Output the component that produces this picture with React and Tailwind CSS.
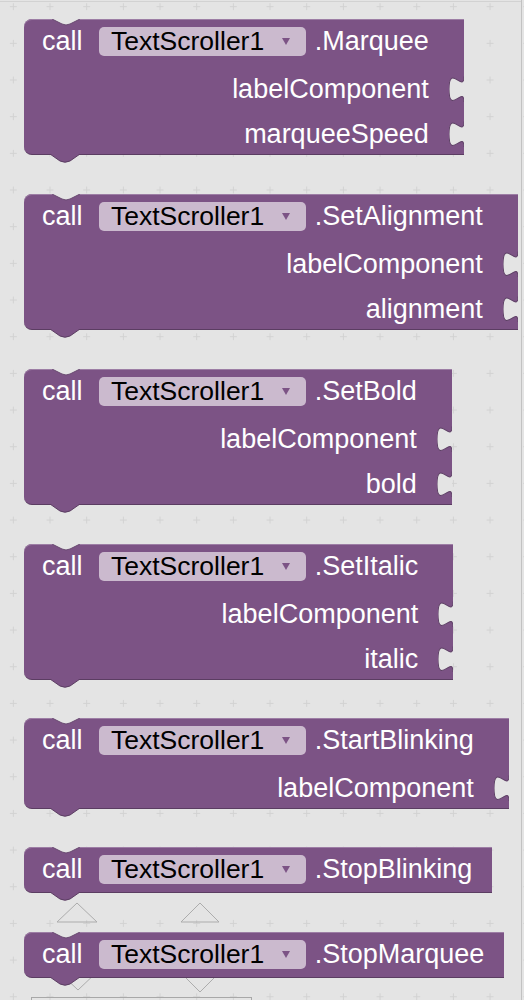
import React from 'react';

// blocks on the workspace, top to bottom
const blocks = [
  { method: '.Marquee', inputs: ['labelComponent', 'marqueeSpeed'], space: 'mt-[19px]' },
  { method: '.SetAlignment', inputs: ['labelComponent', 'alignment'], space: 'mt-[39px]' },
  { method: '.SetBold', inputs: ['labelComponent', 'bold'], space: 'mt-[39px]' },
  { method: '.SetItalic', inputs: ['labelComponent', 'italic'], space: 'mt-[39px]' },
  { method: '.StartBlinking', inputs: ['labelComponent'], space: 'mt-[38px]' },
  { method: '.StopBlinking', inputs: [], space: 'mt-[38px]' },
  { method: '.StopMarquee', inputs: [], space: 'mt-[39px]' },
];

const Workspace = () => (
  <svg className="absolute inset-0" width="524" height="1000">
    <defs>
      <pattern id="grid" x="-5" y="-11.67" width="36.67" height="36.67" patternUnits="userSpaceOnUse">
        <path d="M14.83 18.33H21.83M18.33 14.83V21.83" stroke="#d2d2d2" strokeWidth="1" />
      </pattern>
    </defs>
    <rect width="524" height="1000" fill="url(#grid)" />
    <line x1="0" y1="1.5" x2="521" y2="1.5" stroke="#d2d2d2" />
    <line x1="521.5" y1="0" x2="521.5" y2="1000" stroke="#c2c2c2" />
    {/* insertion markers */}
    <path d="M57 922L77 903L97 922Z" fill="none" stroke="#acacac" />
    <path d="M181 922L200 903L219 922Z" fill="none" stroke="#acacac" />
    <path d="M58 971L78 990L98 971" fill="none" stroke="#acacac" />
    <path d="M180 972L200 992L220 972" fill="none" stroke="#acacac" />
    <rect x="31.5" y="997.5" width="220" height="20" fill="none" stroke="#a8a8a8" />
  </svg>
);

const Socket = () => (
  <svg
    className="absolute right-0 top-[4px]"
    width="15"
    height="34"
    viewBox="-8 0 8 20"
    preserveAspectRatio="none"
  >
    <path d="M0 5C0 15 -8 -3 -8 12.5S0 10 0 20Z" fill="#e4e4e4" />
    <path
      d="M0 5C0 15 -8 -3 -8 12.5S0 10 0 20"
      fill="none"
      stroke="#5e4066"
      strokeWidth="1"
      vectorEffect="non-scaling-stroke"
    />
  </svg>
);

const Block = ({ method, inputs, space }) => {
  const hasInputs = inputs.length > 0;
  return (
    <div
      className={`relative flex flex-col self-start rounded-l-[8px] border-b border-[#5b3d62] bg-[#7c5385] shadow-[inset_0_1px_0_#9d7ea5] ${space}`}
    >
      {/* notch on top */}
      <svg className="absolute left-[28px] top-0" width="28" height="7">
        <path d="M0 0L10 5Q14 7 18 5L28 0Z" fill="#e4e4e4" />
        <path d="M0 0L10 5Q14 7 18 5L28 0" fill="none" stroke="#684870" />
      </svg>

      <div className={`flex h-[45px] items-center pl-[18px] ${hasInputs ? 'pr-[35px]' : 'pr-[20px]'}`}>
        <span className="text-[27px] leading-none text-white">call</span>
        <span className="ml-[16.5px] flex h-[29px] items-center rounded-[5px] bg-[#cbbace] pl-[12px] pr-[16px] text-[26.5px] leading-[29px] text-black">
          TextScroller1
          <svg className="ml-[18px]" width="8" height="7">
            <path d="M0 0H8L4 7Z" fill="#7c5385" />
          </svg>
        </span>
        <span className="ml-[8.5px] text-[27px] leading-none text-white">{method}</span>
      </div>

      {inputs.map((name) => (
        <div key={name} className="relative flex h-[45px] items-center justify-end pl-[18px] pr-[35px] pt-[5px]">
          <span className="text-[27px] leading-none text-white">{name}</span>
          <Socket />
        </div>
      ))}

      {/* tab below */}
      <svg className="absolute left-[26px] top-full" width="30" height="9">
        <path d="M0 0L10 7Q15 9.5 20 7L30 0Z" fill="#7c5385" />
        <path d="M0 0L10 7Q15 9.5 20 7L30 0" fill="none" stroke="#5b3d62" />
      </svg>
    </div>
  );
};

const App = () => {
  return (
    <div className="relative h-[1000px] w-[524px] overflow-hidden bg-[#e4e4e4] font-['Liberation_Sans',Arial,sans-serif]">
      <Workspace />
      <div className="relative flex flex-col pl-[24px]">
        {blocks.map((b) => (
          <Block key={b.method} {...b} />
        ))}
      </div>
    </div>
  );
};

export default App;
